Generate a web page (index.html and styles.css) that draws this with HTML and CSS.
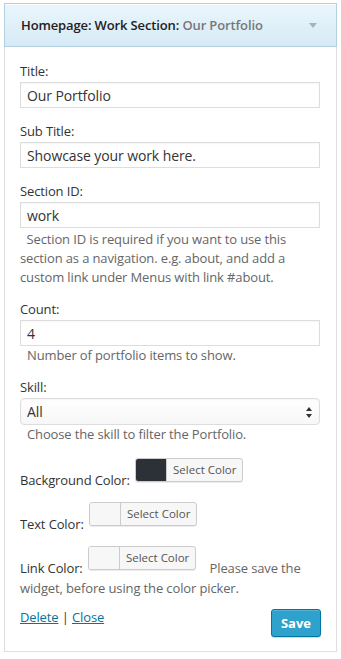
FILE: index.html
```html
<!DOCTYPE html>
<html lang="en">
<head>
  <meta charset="UTF-8">
  <meta name="viewport" content="width=device-width, initial-scale=1.0">
  <title>Widget: Work Section</title>
  <link rel="stylesheet" href="styles.css">
</head>
<body>
  <div class="widget">
    <div class="widget-top">
      <h3>Homepage: Work Section: <span class="in-title">Our Portfolio</span></h3>
      <span class="toggle"></span>
    </div>

    <div class="widget-inside">
      <p class="field">
        <label>Title:</label>
        <input class="widefat" type="text" value="Our Portfolio">
      </p>

      <p class="field">
        <label>Sub Title:</label>
        <input class="widefat" type="text" value="Showcase your work here.">
      </p>

      <p class="field has-desc">
        <label>Section ID:</label>
        <input class="widefat" type="text" value="work">
        <small class="desc">&nbsp; Section ID is required if you want to use this section as a navigation. e.g. about, and add a custom link under Menus with link #about.</small>
      </p>

      <p class="field has-desc">
        <label>Count:</label>
        <input class="widefat" type="text" value="4">
        <small class="desc indent">Number of portfolio items to show.</small>
      </p>

      <p class="field">
        <label>Skill:</label>
        <span class="select-wrap">
          <select class="widefat">
            <option>All</option>
          </select>
          <span class="select-arrows"></span>
        </span>
        <small class="desc indent">Choose the skill to filter the Portfolio.</small>
      </p>

      <p class="color-field">
        <label>Background Color:</label>
        <a class="color-result dark"><span class="swatch"></span><span class="pick">Select Color</span></a>
      </p>

      <p class="color-field">
        <label>Text Color:</label>
        <a class="color-result"><span class="swatch"></span><span class="pick">Select Color</span></a>
      </p>

      <p class="color-field last">
        <label>Link Color:</label>
        <a class="color-result"><span class="swatch"></span><span class="pick">Select Color</span></a>
        <span class="note">Please save the widget, before using the color picker.</span>
      </p>

      <div class="widget-control-actions">
        <div class="links">
          <a href="#">Delete</a> | <a href="#">Close</a>
        </div>
        <button class="button-primary">Save</button>
      </div>
    </div>
  </div>
</body>
</html>
```

FILE: styles.css
```css
body {
  margin: 0;
  padding: 3px 4px 0 4px;
  background: #fff;
  font-family: "Open Sans", "Liberation Sans", sans-serif;
  font-size: 13px;
  letter-spacing: -0.13px;
  color: #333;
}
.widget {
  width: 333px;
}
.widget-top {
  display: flex;
  align-items: center;
  justify-content: space-between;
  height: 42px;
  padding: 0 19px 0 16px;
  border: 1px solid #b4cfdd;
  background: linear-gradient(to bottom, #eaf6fc, #d6eaf6);
  box-shadow: inset 0 1px 0 #fff;
}
.widget-top h3 {
  margin: 0;
  font-size: 13px;
  font-weight: 600;
  color: #222;
}
.in-title {
  color: #777;
}
.toggle {
  width: 0;
  height: 0;
  border-left: 4px solid transparent;
  border-right: 4px solid transparent;
  border-top: 5px solid #a3b2bb;
}
.widget-inside {
  padding: 15px 15px 14px 15px;
  border: 1px solid #dfdfdf;
  border-top: none;
  background: #fff;
}
.field {
  margin: 0 0 14px 0;
  line-height: 19px;
}
.field.has-desc {
  margin-bottom: 13px;
}
.field label {
  display: block;
}
.widefat {
  display: block;
  box-sizing: border-box;
  width: 300px;
  height: 26px;
  margin: 1px 0 0 0;
  padding: 0 6px;
  border: 1px solid #dddddd;
  border-radius: 0;
  background: #fff;
  font-family: "Open Sans", "Liberation Sans", sans-serif;
  font-size: 14px;
  letter-spacing: -0.1px;
  color: #333;
  box-shadow: inset 0 1px 2px rgba(0, 0, 0, 0.04);
}
.desc {
  display: block;
  margin-top: 2px;
  font-size: 13px;
  color: #666;
}
.desc.indent {
  margin-top: 0;
  padding-left: 7px;
}
.select-wrap {
  position: relative;
  display: block;
  width: 300px;
}
select.widefat {
  -webkit-appearance: none;
  appearance: none;
  height: 27px;
  border-radius: 4px;
  background: linear-gradient(to bottom, #ffffff, #f7f7f7);
}
.select-arrows {
  position: absolute;
  right: 8px;
  top: 9px;
  width: 6px;
  height: 11px;
}
.select-arrows::before,
.select-arrows::after {
  content: "";
  position: absolute;
  left: 0;
  border-left: 3px solid transparent;
  border-right: 3px solid transparent;
}
.select-arrows::before {
  top: 0;
  border-bottom: 4px solid #333;
}
.select-arrows::after {
  bottom: 0;
  border-top: 4px solid #333;
}
.color-field {
  margin: 0 0 12px 0;
  line-height: 20px;
  color: #333;
}
.color-field.last {
  margin-bottom: 9px;
}
.color-result {
  display: inline-flex;
  vertical-align: 4px;
  height: 22px;
  margin-left: 2px;
  border: 1px solid #cccccc;
  border-radius: 3px;
  background: #f7f7f7;
  box-shadow: 0 1px 0 rgba(0, 0, 0, 0.08);
  cursor: pointer;
}
.color-result .swatch {
  width: 30px;
  border-radius: 2px 0 0 2px;
  background: #f7f7f7;
}
.color-result.dark .swatch {
  background: #2b3137;
}
.color-result .pick {
  padding: 0 6px;
  border-left: 1px solid #cccccc;
  font-size: 11.5px;
  letter-spacing: 0;
  line-height: 22px;
  color: #555;
}
.note {
  margin-left: 10px;
  color: #666;
}
.widget-control-actions {
  display: flex;
  justify-content: space-between;
  align-items: flex-start;
}
.links {
  line-height: 20px;
  color: #333;
}
.links a {
  color: #0074a2;
}
.button-primary {
  margin-top: 2px;
  height: 28px;
  padding: 0 9px;
  border: 1px solid #0074a2;
  border-radius: 3px;
  background: #2ea2cc;
  box-shadow: inset 0 1px 0 rgba(120, 200, 230, 0.5), 0 1px 0 rgba(0, 0, 0, 0.15);
  font-family: "Open Sans", "Liberation Sans", sans-serif;
  font-size: 13px;
  font-weight: 700;
  color: #fff;
}
```
